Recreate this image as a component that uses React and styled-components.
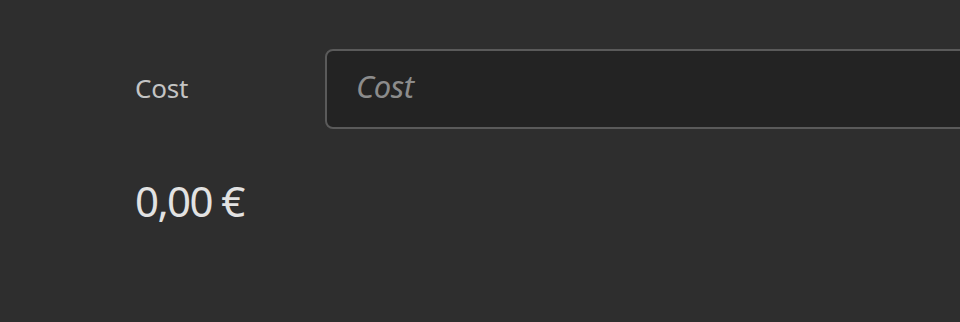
import React from "react";
import styled, { createGlobalStyle } from "styled-components";

const GlobalStyle = createGlobalStyle`
  html, body {
    margin: 0;
    padding: 0;
    background: #2e2e2e;
  }
  body {
    font-family: "Noto Sans", "Open Sans", sans-serif;
  }
`;

const Page = styled.div`
  width: 960px;
  height: 322px;
  overflow: hidden;
  background: #2e2e2e;
  padding: 49px 0 0 135px;
  box-sizing: border-box;
`;

const FieldRow = styled.div`
  display: flex;
  align-items: center;
`;

const Label = styled.label`
  width: 190px;
  flex-shrink: 0;
  font-size: 26px;
  color: #c4c4c4;
  letter-spacing: -0.2px;
  margin-top: -2px;
`;

const Input = styled.input`
  width: 900px;
  flex-shrink: 0;
  height: 80px;
  box-sizing: border-box;
  background: #232323;
  border: 2px solid #5a5a5a;
  border-radius: 8px;
  padding: 0 29px 6px;
  font-family: "Noto Sans", "Open Sans", sans-serif;
  font-size: 31px;
  color: #e0e0e0;
  outline: none;

  &::placeholder {
    color: #8c8c8c;
    font-style: italic;
    letter-spacing: -0.4px;
  }
`;

const Total = styled.div`
  margin-top: 47px;
  font-size: 42px;
  line-height: 1.2;
  color: #e2e2e2;
  letter-spacing: -1.6px;
`;

export default function App() {
  return (
    <>
      <GlobalStyle />
      <Page>
        <FieldRow>
          <Label htmlFor="cost">Cost</Label>
          <Input id="cost" placeholder="Cost" />
        </FieldRow>
        <Total>0,00 €</Total>
      </Page>
    </>
  );
}
